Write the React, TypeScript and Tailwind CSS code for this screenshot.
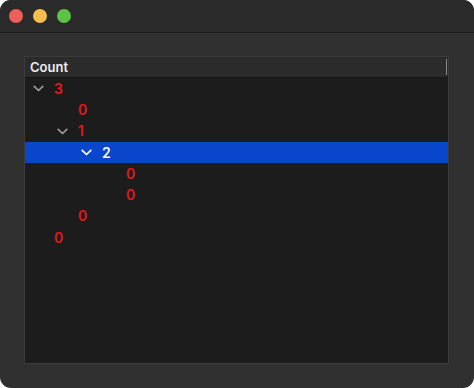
import { Fragment } from 'react';

type Row = { value: number; level: number; expandable: boolean; selected?: boolean };

const rows: Row[] = [
  { value: 3, level: 0, expandable: true },
  { value: 0, level: 1, expandable: false },
  { value: 1, level: 1, expandable: true },
  { value: 2, level: 2, expandable: true, selected: true },
  { value: 0, level: 3, expandable: false },
  { value: 0, level: 3, expandable: false },
  { value: 0, level: 1, expandable: false },
  { value: 0, level: 0, expandable: false },
];

// indent per level, measured off the reference
const pads = ['pl-[8px]', 'pl-[32px]', 'pl-[56px]', 'pl-[80px]'];

function Chevron({ light }: { light?: boolean }) {
  return (
    <svg width="11" height="7" viewBox="0 0 11 7" fill="none" aria-hidden>
      <path
        d="M1.2 1.3l4.3 4.2 4.3-4.2"
        stroke={light ? '#ffffff' : '#9b9b9b'}
        strokeWidth="1.7"
        strokeLinecap="round"
        strokeLinejoin="round"
      />
    </svg>
  );
}

export default function App() {
  return (
    <div className="w-[474px] h-[388px] bg-white font-['Inter',sans-serif]">
      <div className="w-full h-full rounded-[11px] bg-[#303030] flex flex-col overflow-hidden">
        {/* title bar */}
        <div className="h-[33px] shrink-0 bg-[#2a2a2a] border-b border-[#1c1c1c] flex items-center gap-[10px] pl-[9px]">
          <span className="w-[14px] h-[14px] rounded-full bg-[#ee5f58]" />
          <span className="w-[14px] h-[14px] rounded-full bg-[#f5be4f]" />
          <span className="w-[14px] h-[14px] rounded-full bg-[#5cc346]" />
        </div>

        <div className="flex-1 pt-[23px] pl-[24px] pr-[25px] pb-[24px]">
          <div className="h-full bg-[#1c1c1c] border border-[#3b3b3b] flex flex-col">
            <div className="h-[21px] shrink-0 bg-[#2b2b2b] border-b border-[#161616] flex items-center justify-between pl-[5px]">
              <span className="text-[13px] font-semibold text-[#ececec] leading-none">Count</span>
              <span className="w-px h-[16px] bg-[#8a8a8a] mr-[1px]" />
            </div>
            <div className="flex flex-col">
              {rows.map((r, i) => (
                <Fragment key={i}>
                  <div
                    className={`h-[21.3px] flex items-center ${pads[r.level]} ${
                      r.selected ? 'bg-[#0a46cc]' : ''
                    }`}
                  >
                    <span className="w-[21px] flex justify-start">
                      {r.expandable && <Chevron light={r.selected} />}
                    </span>
                    <span
                      className={`text-[14px] font-semibold leading-none ${
                        r.selected ? 'text-white' : 'text-[#e5191a]'
                      }`}
                    >
                      {r.value}
                    </span>
                  </div>
                </Fragment>
              ))}
            </div>
          </div>
        </div>
      </div>
    </div>
  );
}
